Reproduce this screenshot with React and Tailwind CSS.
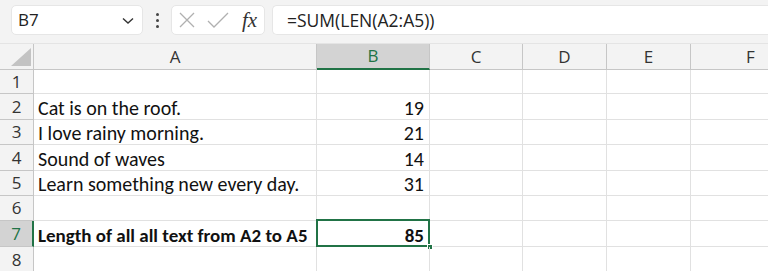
import React from "react";

const cols = ["A", "B", "C", "D", "E", "F"];
const rowHeights = [24, 26, 25, 26, 25, 25, 26, 26];
const data = {
  2: ["Cat is on the roof.", "19"],
  3: ["I love rainy morning.", "21"],
  4: ["Sound of waves", "14"],
  5: ["Learn something new every day.", "31"],
  7: ["Length of all all text from A2 to A5", "85"],
};

const cellFont = { fontFamily: "Carlito, Calibri, Lato, 'Liberation Sans', sans-serif" };

export default function App() {
  return (
    <div className="w-[768px] h-[271px] overflow-hidden bg-white" style={{ fontFamily: "'Segoe UI', 'Open Sans', 'Noto Sans', sans-serif" }}>
      {/* toolbar */}
      <div className="h-[44px] bg-[#f3f3f3] flex items-start pt-[5px] pl-[11px] border-b border-[#e4e4e4]">
        <div className="w-[132px] h-[30px] bg-white rounded-[5px] border border-[#e6e6e6] flex items-center pl-[6px] pr-[8px] justify-between">
          <span className="text-[17px] text-[#222]">B7</span>
          <svg width="12" height="8" viewBox="0 0 12 8" className="mt-[2px]">
            <path d="M1 1.5 L6 6 L11 1.5" fill="none" stroke="#333" strokeWidth="1.4" />
          </svg>
        </div>
        <div className="w-[28px] h-[30px] flex flex-col items-center justify-center gap-[3px]">
          <span className="w-[3px] h-[3px] bg-[#444] rounded-full" />
          <span className="w-[3px] h-[3px] bg-[#444] rounded-full" />
          <span className="w-[3px] h-[3px] bg-[#444] rounded-full" />
        </div>
        <div className="w-[94px] h-[30px] bg-white rounded-[5px] border border-[#e6e6e6] flex items-center pl-[6px]">
          <svg width="18" height="16" viewBox="0 0 18 16">
            <path d="M2 1 L16 15 M16 1 L2 15" fill="none" stroke="#b0b0b0" strokeWidth="1.3" />
          </svg>
          <svg width="22" height="16" viewBox="0 0 22 16" className="ml-[11px]">
            <path d="M1 9 L7 15 L21 1" fill="none" stroke="#b0b0b0" strokeWidth="1.3" />
          </svg>
          <span className="ml-[13px] text-[21px] italic text-[#333] leading-none" style={{ fontFamily: "'Liberation Serif', 'DejaVu Serif', serif" }}>fx</span>
        </div>
        <div className="ml-[7px] flex-1 h-[30px] bg-white rounded-l-[5px] border border-r-0 border-[#e6e6e6] flex items-center pl-[14px]">
          <span className="text-[17.5px] text-[#222]">=SUM(LEN(A2:A5))</span>
        </div>
      </div>

      {/* grid */}
      <div className="grid grid-cols-[34px_283px_113px_93px_84px_84px_120px]">
        {/* header row */}
        <div className="h-[26px] bg-[#f3f3f3] border-r border-b border-[#c6c6c6] relative">
          <svg width="20" height="18" viewBox="0 0 20 18" className="absolute right-[2px] bottom-[3px]">
            <polygon points="20,0 20,18 0,18" fill="#c3c3c3" />
          </svg>
        </div>
        {cols.map((c) => (
          <div
            key={c}
            className={
              c === "B"
                ? "h-[26px] bg-[#d3d3d3] border-r border-[#c6c6c6] border-b-2 border-b-[#217346] flex items-center justify-center text-[17px] text-[#217346]"
                : "h-[26px] bg-[#f3f3f3] border-r border-b border-[#c6c6c6] flex items-center justify-center text-[17px] text-[#333]"
            }
          >
            {c}
          </div>
        ))}

        {rowHeights.map((h, i) => {
          const r = i + 1;
          const d = data[r];
          const sel = r === 7;
          return (
            <React.Fragment key={r}>
              <div
                className={
                  sel
                    ? "bg-[#d3d3d3] border-b border-[#c6c6c6] border-r-2 border-r-[#217346] flex items-center justify-center text-[17px] text-[#217346]"
                    : "bg-[#f3f3f3] border-r border-b border-[#c6c6c6] flex items-center justify-center text-[17px] text-[#333]"
                }
                style={{ height: h }}
              >
                {r}
              </div>
              <div
                className={`border-r border-b border-[#e1e1e1] flex items-end pl-[4px] pb-[1px] leading-none text-[#111] whitespace-nowrap ${sel ? "font-bold text-[19px]" : "text-[20px]"}`}
                style={{ height: h, ...cellFont }}
              >
                {d ? d[0] : ""}
              </div>
              <div
                className={`relative border-r border-b border-[#e1e1e1] flex items-end justify-end pr-[5px] pb-[1px] leading-none text-[#111] ${sel ? "font-bold text-[19px]" : "text-[20px]"}`}
                style={{ height: h, ...cellFont }}
              >
                {d ? d[1] : ""}
                {sel && (
                  <>
                    <div className="absolute left-[-1px] top-[-2px] right-[-1px] bottom-[-1px] border-2 border-[#217346] pointer-events-none" />
                    <div className="absolute right-[-4px] bottom-[-4px] w-[6px] h-[6px] bg-[#217346] border border-white" />
                  </>
                )}
              </div>
              <div className="border-r border-b border-[#e1e1e1]" style={{ height: h }} />
              <div className="border-r border-b border-[#e1e1e1]" style={{ height: h }} />
              <div className="border-r border-b border-[#e1e1e1]" style={{ height: h }} />
              <div className="border-b border-[#e1e1e1]" style={{ height: h }} />
            </React.Fragment>
          );
        })}
      </div>
    </div>
  );
}
